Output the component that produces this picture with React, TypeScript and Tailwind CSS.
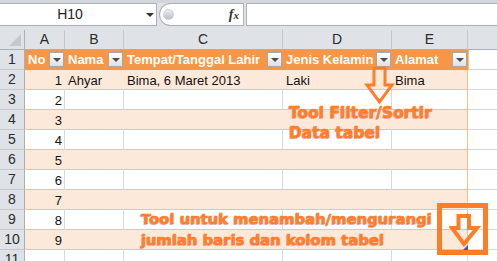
const COLS = [40, 59, 159, 109, 76];
const HEAD = ["No", "Nama", "Tempat/Tanggal Lahir", "Jenis Kelamin", "Alamat"];
const LETTERS = ["A", "B", "C", "D", "E"];

const rows: string[][] = [
  ["1", "Ahyar", "Bima, 6 Maret 2013", "Laki", "Bima"],
  ["2", "", "", "", ""],
  ["3", "", "", "", ""],
  ["4", "", "", "", ""],
  ["5", "", "", "", ""],
  ["6", "", "", "", ""],
  ["7", "", "", "", ""],
  ["8", "", "", "", ""],
  ["9", "", "", "", ""],
];

const FilterBtn = () => (
  <div className="w-[15px] h-[15px] shrink-0 border border-[#a3a8ae] bg-gradient-to-b from-white to-[#dde0e4] flex items-center justify-center">
    <div className="w-0 h-0 border-l-[4px] border-r-[4px] border-t-[4px] border-l-transparent border-r-transparent border-t-[#4d4d4d]" />
  </div>
);

const RowHead = ({ n }: { n: number }) => (
  <div className="w-[25px] h-[20px] shrink-0 bg-[#dfe3e8] border-r border-r-[#a9afb6] border-b border-b-[#c5c9ce] text-center text-[14px] leading-[19px] text-[#2b2b2b]">
    {n}
  </div>
);

const App = () => {
  return (
    <div
      className="w-[497px] h-[261px] overflow-hidden bg-white relative text-[#111]"
      style={{ fontFamily: '"Liberation Sans", Arial, sans-serif' }}
    >
      {/* formula bar */}
      <div className="h-[3px] bg-[#d3d7dc]" />
      <div className="flex h-[23px] bg-[#dfe3e8]">
        <div className="w-[157px] h-full bg-white border-y border-r border-[#aab1b9] flex items-center relative">
          <span className="w-[140px] text-center text-[14px] text-[#222]">H10</span>
          <div className="absolute left-[146px] top-[9px] w-0 h-0 border-l-[4px] border-r-[4px] border-t-[4px] border-l-transparent border-r-transparent border-t-[#333]" />
        </div>
        <div className="ml-[2px] w-[84px] h-full bg-white border-y border-l border-[#aab1b9] rounded-l-full flex items-center justify-between pl-[3px] pr-[4px]">
          <div className="w-[11px] h-[11px] rounded-full bg-gradient-to-b from-[#eef0f2] to-[#b9bec4] border border-[#c9cdd2]" />
          <span
            className="italic font-bold text-[14px] text-[#333]"
            style={{ fontFamily: '"Liberation Serif", serif' }}
          >
            f<span className="text-[11px]">x</span>
          </span>
        </div>
        <div className="w-[3px] h-full border-l border-[#aab1b9]" />
        <div className="flex-1 h-full bg-white border border-[#aab1b9] border-r-0" />
      </div>
      <div className="h-[4px] bg-[#dfe3e8]" />

      {/* sheet */}
      <div className="relative">
        {/* column headers */}
        <div className="flex h-[20px]">
          <div className="w-[25px] shrink-0 bg-[#dfe3e8] border-r border-b border-[#a9afb6] relative">
            <svg className="absolute right-[3px] bottom-[3px]" width="12" height="12" viewBox="0 0 12 12">
              <polygon points="12,0 12,12 0,12" fill="#c3c8cd" />
            </svg>
          </div>
          {COLS.map((w, i) => (
            <div
              key={i}
              style={{ width: w }}
              className="shrink-0 bg-[#dfe3e8] border-r border-r-[#c3c7cc] border-b border-b-[#a9afb6] text-center text-[14px] leading-[19px] text-[#2b2b2b]"
            >
              {LETTERS[i]}
            </div>
          ))}
          <div className="flex-1 bg-[#dfe3e8] border-b border-[#a9afb6]" />
        </div>

        {/* row 1: table header */}
        <div className="flex h-[20px]">
          <RowHead n={1} />
          {COLS.map((w, i) => (
            <div
              key={i}
              style={{ width: w }}
              className="shrink-0 bg-[#f79646] border-b border-b-[#f79646] flex items-center justify-between pl-[3px] pr-[1px] text-white font-bold text-[13px] overflow-hidden whitespace-nowrap"
            >
              <span>{HEAD[i]}</span>
              <FilterBtn />
            </div>
          ))}
          <div className="flex-1 border-l border-[#fabf8f] border-b border-b-[#d4d4d4]" />
        </div>

        {/* data rows */}
        {rows.map((r, ri) => {
          const band = ri % 2 === 0;
          return (
            <div key={ri} className="flex h-[20px]">
              <RowHead n={ri + 2} />
              {COLS.map((w, i) => (
                <div
                  key={i}
                  style={{ width: w }}
                  className={`shrink-0 border-b border-b-[#fabf8f] border-r text-[13px] leading-[19px] pt-[1px] whitespace-nowrap ${
                    i === 0 ? "text-right pr-[2px]" : "pl-[3px]"
                  } ${band ? "bg-[#fde9d9]" : "bg-white"} ${
                    i === 4 ? "border-r-[#fabf8f]" : band ? "border-r-[#fde9d9]" : "border-r-[#d9d9d9]"
                  }`}
                >
                  {r[i]}
                </div>
              ))}
              <div className="flex-1 border-b border-[#d9d9d9]" />
            </div>
          );
        })}

        {/* row 11 */}
        <div className="flex h-[20px]">
          <RowHead n={11} />
          {COLS.map((w, i) => (
            <div key={i} style={{ width: w }} className="shrink-0 border-r border-b border-[#d9d9d9]" />
          ))}
          <div className="flex-1" />
        </div>

        {/* annotations */}
        <svg className="absolute left-[364px] top-[34px]" width="32" height="42" viewBox="0 0 32 42">
          <polygon
            points="10,4 21,4 21,21 28,21 15.5,38 3,21 10,21"
            fill="none"
            stroke="#fd7e27"
            strokeWidth="3"
            strokeLinejoin="miter"
          />
        </svg>
        <div
          className="absolute left-[289px] top-[73px] text-[15.5px] leading-[20px] font-bold text-[#fd7f28] whitespace-nowrap [-webkit-text-stroke:0.6px_#fd7f28] [text-shadow:-1px_1px_0_#f7a6b8]"
          style={{ fontFamily: '"DejaVu Sans", Verdana, sans-serif' }}
        >
          Tool Filter/Sortir
          <br />
          Data tabel
        </div>
        <div
          className="absolute left-[141px] top-[178px] text-[14.8px] leading-[21px] font-bold text-[#fd7f28] whitespace-nowrap [-webkit-text-stroke:0.6px_#fd7f28] [text-shadow:-1px_1px_0_#f7a6b8]"
          style={{ fontFamily: '"DejaVu Sans", Verdana, sans-serif' }}
        >
          Tool untuk menambah/mengurangi
          <br />
          jumlah baris dan kolom tabel
        </div>
        <div className="absolute left-[437px] top-[173px] w-[51px] h-[52px] border-[5px] border-[#fd7e27]" />
        <svg className="absolute left-[449px] top-[183px]" width="32" height="34" viewBox="0 0 32 34">
          <polygon
            points="9.5,3 20,3 20,15 28,15 15,31 3,15 9.5,15"
            fill="none"
            stroke="#fd7e27"
            strokeWidth="4"
          />
        </svg>
        <svg className="absolute left-[463px] top-[215px]" width="5" height="5" viewBox="0 0 5 5">
          <polygon points="5,0 5,5 0,5" fill="#3a52b5" />
        </svg>
      </div>
    </div>
  );
};

export default App;
